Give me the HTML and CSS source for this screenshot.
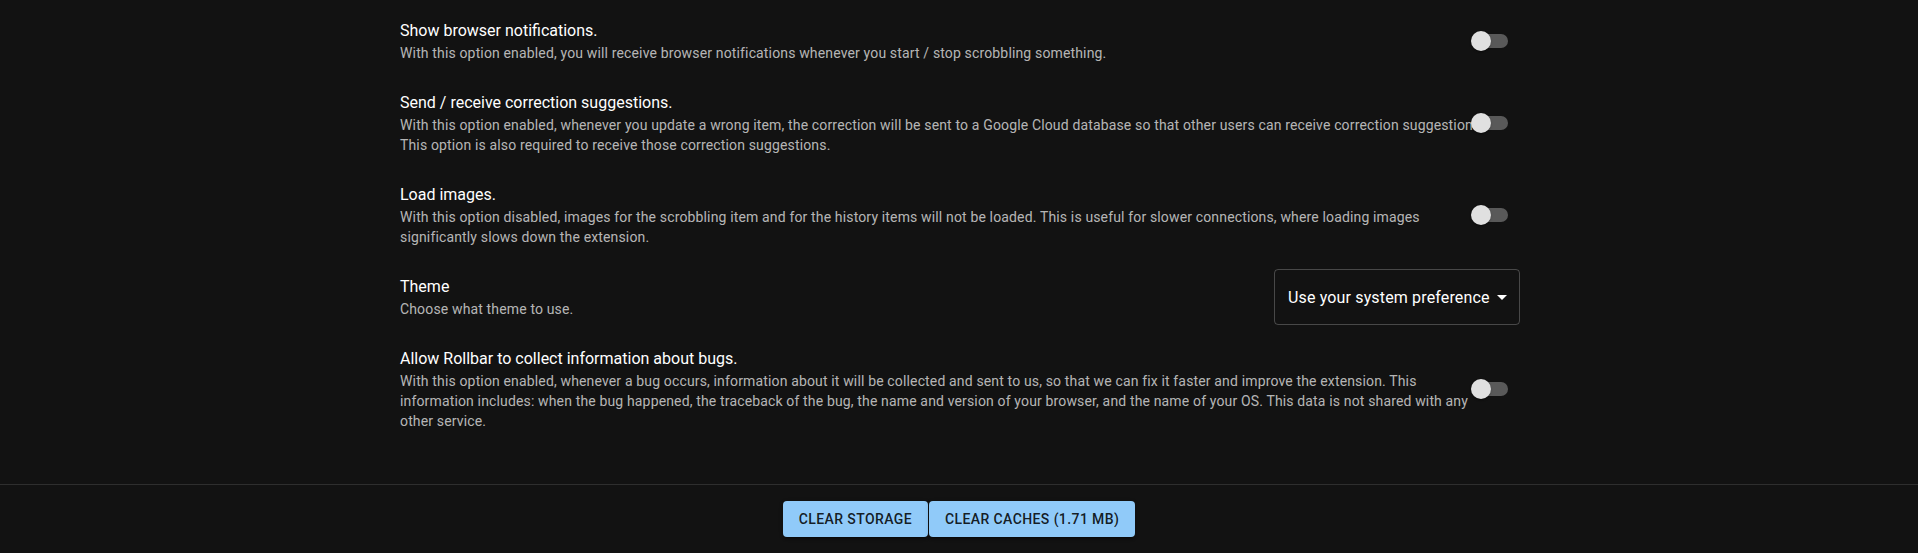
FILE: index.html
```html
<!DOCTYPE html>
<html lang="en">
<head>
<meta charset="utf-8">
<title>Options</title>
<link rel="stylesheet" href="styles.css">
</head>
<body>
<div class="page">
  <main class="main">
    <ul class="list">
      <li class="row">
        <div class="text">
          <div class="title">Show browser notifications.</div>
          <div class="desc">With this option enabled, you will receive browser notifications whenever you start / stop scrobbling something.</div>
        </div>
        <span class="switch"><span class="track"></span><span class="thumb"></span></span>
      </li>
      <li class="row">
        <div class="text">
          <div class="title">Send / receive correction suggestions.</div>
          <div class="desc">With this option enabled, whenever you update a wrong item, the correction will be sent to a Google Cloud database so that other users can receive correction suggestions. This option is also required to receive those correction suggestions.</div>
        </div>
        <span class="switch"><span class="track"></span><span class="thumb"></span></span>
      </li>
      <li class="row">
        <div class="text">
          <div class="title">Load images.</div>
          <div class="desc">With this option disabled, images for the scrobbling item and for the history items will not be loaded. This is useful for slower connections, where loading images significantly slows down the extension.</div>
        </div>
        <span class="switch"><span class="track"></span><span class="thumb"></span></span>
      </li>
      <li class="row row-select">
        <div class="text">
          <div class="title">Theme</div>
          <div class="desc">Choose what theme to use.</div>
        </div>
        <div class="select">
          <span class="select-value">Use your system preference</span>
          <svg class="select-icon" viewBox="0 0 24 24" width="24" height="24" aria-hidden="true"><path d="M7 10l5 5 5-5z" fill="currentColor"/></svg>
        </div>
      </li>
      <li class="row">
        <div class="text">
          <div class="title">Allow Rollbar to collect information about bugs.</div>
          <div class="desc">With this option enabled, whenever a bug occurs, information about it will be collected and sent to us, so that we can fix it faster and improve the extension. This information includes: when the bug happened, the traceback of the bug, the name and version of your browser, and the name of your OS. This data is not shared with any other service.</div>
        </div>
        <span class="switch"><span class="track"></span><span class="thumb"></span></span>
      </li>
    </ul>
  </main>
  <footer class="footer">
    <button class="btn" type="button">Clear storage</button>
    <button class="btn" type="button">Clear caches (1.71 MB)</button>
  </footer>
</div>
</body>
</html>
```

FILE: styles.css
```css
* { box-sizing: border-box; }

html, body {
  margin: 0;
  padding: 0;
  background: #121212;
  color: #fff;
  font-family: Roboto, "Liberation Sans", Arial, sans-serif;
}

.page {
  height: 100vh;
  display: flex;
  flex-direction: column;
}

.main {
  flex: 1;
  padding-top: 5px;
}

.list {
  list-style: none;
  margin: 0 0 0 400px;
  padding: 0;
  width: 1120px;
}

.row {
  display: flex;
  align-items: center;
  padding: 8px 0;
}

.text {
  flex: 1;
  min-width: 0;
  margin: 6px 0;
}

.title {
  font-size: 16px;
  line-height: 24px;
  color: #fff;
}

.desc {
  font-size: 14px;
  line-height: 20px;
  letter-spacing: 0.01071em;
  color: rgba(255, 255, 255, 0.7);
}

.switch {
  position: relative;
  z-index: 1;
  flex: none;
  width: 58px;
  height: 38px;
  margin-left: -26px;
}

.track {
  position: absolute;
  left: 12px;
  top: 12px;
  width: 34px;
  height: 14px;
  border-radius: 7px;
  background: #fff;
  opacity: 0.3;
}

.thumb {
  position: absolute;
  left: 9px;
  top: 9px;
  width: 20px;
  height: 20px;
  border-radius: 50%;
  background: #e0e0e0;
  box-shadow: 0 2px 1px -1px rgba(0,0,0,0.2), 0 1px 1px 0 rgba(0,0,0,0.14), 0 1px 3px 0 rgba(0,0,0,0.12);
}

.select {
  flex: none;
  display: flex;
  align-items: center;
  justify-content: space-between;
  width: 246px;
  height: 56px;
  padding: 0 7px 0 13px;
  border: 1px solid rgba(255, 255, 255, 0.23);
  border-radius: 4px;
  font-size: 16px;
  color: #fff;
}

.select-value {
  line-height: 23px;
  letter-spacing: 0.00938em;
  white-space: nowrap;
}

.select-icon {
  flex: none;
  color: #fff;
}

.footer {
  flex: none;
  display: flex;
  justify-content: center;
  gap: 1px;
  padding: 16px;
  border-top: 1px solid rgba(255, 255, 255, 0.12);
}

.btn {
  font-family: Roboto, "Liberation Sans", Arial, sans-serif;
  font-weight: 500;
  font-size: 14px;
  line-height: 24.5px;
  letter-spacing: 0.4px;
  text-transform: uppercase;
  color: rgba(0, 0, 0, 0.87);
  background: #90caf9;
  border: 0;
  border-radius: 4px;
  padding: 6px 16px;
  box-shadow: 0 3px 1px -2px rgba(0,0,0,0.2), 0 2px 2px 0 rgba(0,0,0,0.14), 0 1px 5px 0 rgba(0,0,0,0.12);
  cursor: pointer;
}
```
